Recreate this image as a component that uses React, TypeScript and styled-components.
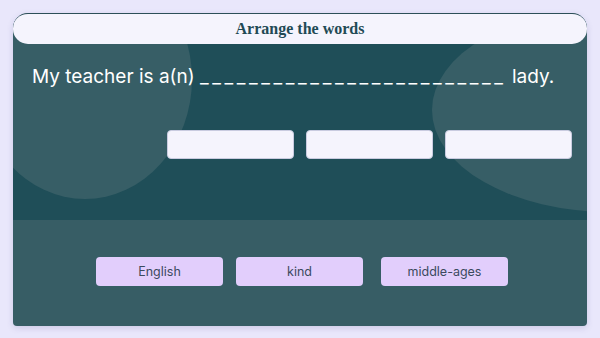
import * as React from 'react';
import styled, { createGlobalStyle } from 'styled-components';

const GlobalStyle = createGlobalStyle`
  html, body {
    margin: 0;
    padding: 0;
    background: #e9e7fb;
  }
  body {
    font-family: Inter, "Noto Sans", sans-serif;
  }
`;

const Page = styled.div`
  width: 600px;
  height: 338px;
  padding: 13px;
  box-sizing: border-box;
`;

const Card = styled.div`
  position: relative;
  display: flex;
  flex-direction: column;
  height: 312px;
  border-radius: 15px 15px 4px 4px;
  border-top: 1px solid #2c4f58;
  background: #375d65;
  overflow: hidden;
  box-shadow: 0 2px 6px rgba(80, 70, 140, 0.18);
`;

const Header = styled.div`
  position: relative;
  z-index: 2;
  height: 31px;
  flex: none;
  display: flex;
  align-items: center;
  justify-content: center;
  background: #f5f4fd;
  border-radius: 15px;
  margin-top: -1px;
  font-family: "Liberation Serif", "DejaVu Serif", serif;
  font-weight: 700;
  font-size: 16px;
  color: #1f4a55;
`;

/* the dark stage slides up under the header's rounded bottom */
const Stage = styled.div`
  position: relative;
  flex: none;
  height: 191px;
  margin-top: -15px;
  padding-top: 15px;
  box-sizing: border-box;
  background: #1f4e58;
  overflow: hidden;
`;

const Blob = styled.div<{ $x: number; $y: number; $rx: number; $ry: number }>`
  position: absolute;
  left: ${(p) => p.$x - p.$rx}px;
  top: ${(p) => p.$y - p.$ry}px;
  width: ${(p) => p.$rx * 2}px;
  height: ${(p) => p.$ry * 2}px;
  border-radius: 50%;
  background: #375e66;
`;

const StageContent = styled.div`
  position: relative;
  z-index: 1;
  display: flex;
  flex-direction: column;
`;

const Sentence = styled.p`
  margin: 0;
  padding: 21px 0 0 19px;
  font-size: 19px;
  line-height: 24px;
  color: #ffffff;
  white-space: nowrap;
`;

const Gap = styled.span`
  letter-spacing: 3.6px;
`;

const Blanks = styled.div`
  display: flex;
  justify-content: flex-end;
  gap: 12px;
  padding: 41px 15px 0 0;
`;

const Blank = styled.div`
  width: 127px;
  height: 29px;
  box-sizing: border-box;
  border-radius: 4px;
  background: #f5f4fd;
  border: 1px solid #c9cbe0;
`;

const Tray = styled.div`
  flex: 1;
  display: flex;
  align-items: center;
  justify-content: center;
  gap: 13px;
  padding: 0 0 4px 4px;
`;

const Chip = styled.div<{ $gapBefore?: number }>`
  width: 127px;
  height: 29px;
  display: flex;
  align-items: center;
  justify-content: center;
  margin-left: ${(p) => p.$gapBefore ?? 0}px;
  border-radius: 4px;
  background: #e2cefc;
  font-size: 12.5px;
  color: #3b4a5e;
`;

export default function App() {
  return (
    <Page>
      <GlobalStyle />
      <Card>
        <Header>Arrange the words</Header>
        <Stage>
          <Blob $x={72} $y={50} $rx={107} $ry={120} />
          <Blob $x={597} $y={81} $rx={178} $ry={102} />
          <StageContent>
            <Sentence>
              My teacher is a(n) <Gap>{'_'.repeat(25)}</Gap> lady.
            </Sentence>
            <Blanks>
              <Blank />
              <Blank />
              <Blank />
            </Blanks>
          </StageContent>
        </Stage>
        <Tray>
          <Chip>English</Chip>
          <Chip>kind</Chip>
          <Chip $gapBefore={5}>middle-ages</Chip>
        </Tray>
      </Card>
    </Page>
  );
}
